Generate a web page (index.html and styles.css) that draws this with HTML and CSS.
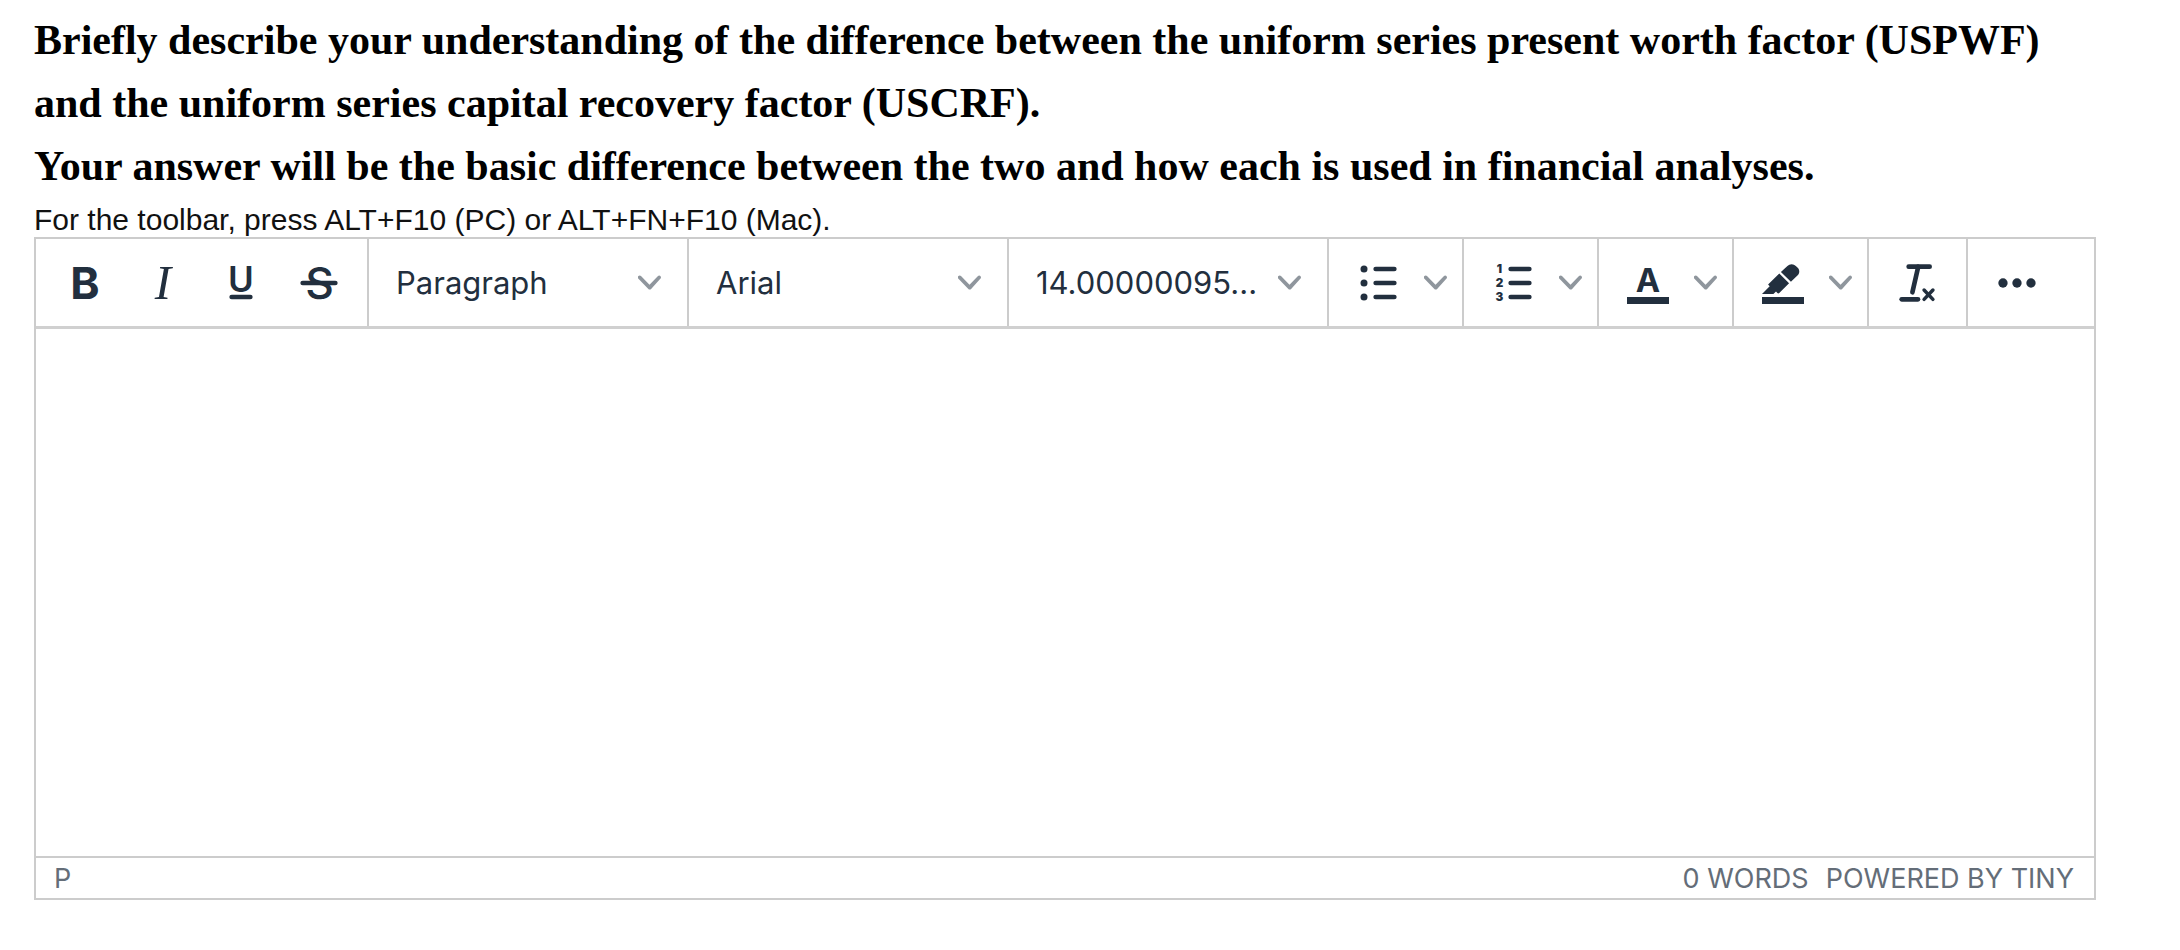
FILE: index.html
```html
<!DOCTYPE html>
<html lang="en">
<head>
    <meta charset="UTF-8">
    <meta name="viewport" content="width=device-width, initial-scale=1.0">
    <title>Essay Question</title>
    <link rel="stylesheet" href="styles.css">
</head>
<body>

    <main class="question">
        <div class="prompt">
            <p>Briefly describe your understanding of the difference between the uniform series present worth factor (USPWF) and the uniform series capital recovery factor (USCRF).</p>
            <p>Your answer will be the basic difference between the two and how each is used in financial analyses.</p>
        </div>

        <label class="hint" for="answer">For the toolbar, press ALT+F10 (PC) or ALT+FN+F10 (Mac).</label>

        <div class="editor">
            <div class="toolbar" role="toolbar">
                <div class="group">
                    <button type="button" class="tool" aria-label="Bold">
                        <svg class="icon" viewBox="0 0 24 24"><text class="bold" x="12" y="19">B</text></svg>
                    </button>
                    <button type="button" class="tool" aria-label="Italic">
                        <svg class="icon" viewBox="0 0 24 24"><text class="italic" x="12" y="19">I</text></svg>
                    </button>
                    <button type="button" class="tool" aria-label="Underline">
                        <svg class="icon" viewBox="0 0 24 24">
                            <text class="underline" x="12" y="15.7">U</text>
                            <rect x="7" y="17" width="10" height="2" rx="1"/>
                        </svg>
                    </button>
                    <button type="button" class="tool" aria-label="Strikethrough">
                        <svg class="icon" viewBox="0 0 24 24">
                            <text class="strike" x="12.2" y="18.8">S</text>
                            <rect x="4" y="11" width="16" height="2" rx="1"/>
                        </svg>
                    </button>
                </div>

                <div class="group select-group">
                    <select class="picker" aria-label="Blocks">
                        <option>Paragraph</option>
                    </select>
                    <svg class="chevron" viewBox="0 0 10 10"><path d="M8.7 2.2c.3-.3.8-.3 1 0 .4.4.4.9 0 1.2L5.7 7.8c-.3.3-.9.3-1.2 0L.2 3.4a.8.8 0 0 1 0-1.2c.3-.3.8-.3 1.1 0L5 6l3.7-3.8Z"/></svg>
                </div>
                <div class="group select-group">
                    <select class="picker" aria-label="Fonts">
                        <option>Arial</option>
                    </select>
                    <svg class="chevron" viewBox="0 0 10 10"><path d="M8.7 2.2c.3-.3.8-.3 1 0 .4.4.4.9 0 1.2L5.7 7.8c-.3.3-.9.3-1.2 0L.2 3.4a.8.8 0 0 1 0-1.2c.3-.3.8-.3 1.1 0L5 6l3.7-3.8Z"/></svg>
                </div>
                <div class="group select-group">
                    <select class="picker" aria-label="Font sizes">
                        <option>14.00000095...</option>
                    </select>
                    <svg class="chevron" viewBox="0 0 10 10"><path d="M8.7 2.2c.3-.3.8-.3 1 0 .4.4.4.9 0 1.2L5.7 7.8c-.3.3-.9.3-1.2 0L.2 3.4a.8.8 0 0 1 0-1.2c.3-.3.8-.3 1.1 0L5 6l3.7-3.8Z"/></svg>
                </div>

                <div class="group">
                    <button type="button" class="tool" aria-label="Bullet list">
                        <svg class="icon" viewBox="0 0 24 24">
                            <rect x="10" y="5" width="10" height="2" rx="1"/>
                            <rect x="10" y="11" width="10" height="2" rx="1"/>
                            <rect x="10" y="17" width="10" height="2" rx="1"/>
                            <circle cx="6" cy="6" r="1.5"/>
                            <circle cx="6" cy="12" r="1.5"/>
                            <circle cx="6" cy="18" r="1.5"/>
                        </svg>
                    </button>
                    <button type="button" class="more" aria-label="Bullet list menu">
                        <svg class="chevron" viewBox="0 0 10 10"><path d="M8.7 2.2c.3-.3.8-.3 1 0 .4.4.4.9 0 1.2L5.7 7.8c-.3.3-.9.3-1.2 0L.2 3.4a.8.8 0 0 1 0-1.2c.3-.3.8-.3 1.1 0L5 6l3.7-3.8Z"/></svg>
                    </button>
                </div>
                <div class="group">
                    <button type="button" class="tool" aria-label="Numbered list">
                        <svg class="icon" viewBox="0 0 24 24">
                            <rect x="10" y="5" width="10" height="2" rx="1"/>
                            <rect x="10" y="11" width="10" height="2" rx="1"/>
                            <rect x="10" y="17" width="10" height="2" rx="1"/>
                            <text class="digit" x="6.2" y="7.8">1</text>
                            <text class="digit" x="6.2" y="13.8">2</text>
                            <text class="digit" x="6.2" y="19.8">3</text>
                        </svg>
                    </button>
                    <button type="button" class="more" aria-label="Numbered list menu">
                        <svg class="chevron" viewBox="0 0 10 10"><path d="M8.7 2.2c.3-.3.8-.3 1 0 .4.4.4.9 0 1.2L5.7 7.8c-.3.3-.9.3-1.2 0L.2 3.4a.8.8 0 0 1 0-1.2c.3-.3.8-.3 1.1 0L5 6l3.7-3.8Z"/></svg>
                    </button>
                </div>
                <div class="group">
                    <button type="button" class="tool" aria-label="Text color">
                        <svg class="icon" viewBox="0 0 24 24">
                            <text class="color" x="12" y="16">A</text>
                            <path d="M3 18h18v3H3z"/>
                        </svg>
                    </button>
                    <button type="button" class="more" aria-label="Text color menu">
                        <svg class="chevron" viewBox="0 0 10 10"><path d="M8.7 2.2c.3-.3.8-.3 1 0 .4.4.4.9 0 1.2L5.7 7.8c-.3.3-.9.3-1.2 0L.2 3.4a.8.8 0 0 1 0-1.2c.3-.3.8-.3 1.1 0L5 6l3.7-3.8Z"/></svg>
                    </button>
                </div>
                <div class="group">
                    <button type="button" class="tool" aria-label="Background color">
                        <svg class="icon" viewBox="0 0 24 24">
                            <path d="M3 18h18v3H3z"/>
                            <path d="M7.7 16.7H3l3.3-3.3-.7-.8L10.4 7.900l4.200 4.200-4.200 4.200c-.2.2-.6.2-.8 0l-.6-.7-1.1 1.1zm3.400-9.400L13.900 4.700a2.600 2.600 0 0 1 3.600 0L18.300 5.500c.9.9.9 2.300 0 3.200l-2.900 2.800z"/>
                        </svg>
                    </button>
                    <button type="button" class="more" aria-label="Background color menu">
                        <svg class="chevron" viewBox="0 0 10 10"><path d="M8.7 2.2c.3-.3.8-.3 1 0 .4.4.4.9 0 1.2L5.7 7.8c-.3.3-.9.3-1.2 0L.2 3.4a.8.8 0 0 1 0-1.2c.3-.3.8-.3 1.1 0L5 6l3.7-3.8Z"/></svg>
                    </button>
                </div>

                <div class="group">
                    <button type="button" class="tool" aria-label="Clear formatting">
                        <svg class="icon lines" viewBox="0 0 24 24">
                            <line x1="8" y1="5" x2="17" y2="5"/>
                            <line x1="12.1" y1="5" x2="9.6" y2="16"/>
                            <line x1="5" y1="19" x2="12" y2="19"/>
                            <line class="cross" x1="14.6" y1="15" x2="18.4" y2="19"/>
                            <line class="cross" x1="18.4" y1="15" x2="14.6" y2="19"/>
                        </svg>
                    </button>
                </div>
                <div class="group last">
                    <button type="button" class="tool" aria-label="More">
                        <svg class="icon" viewBox="0 0 24 24">
                            <circle cx="6" cy="12" r="2"/>
                            <circle cx="12" cy="12" r="2"/>
                            <circle cx="18" cy="12" r="2"/>
                        </svg>
                    </button>
                </div>
            </div>

            <textarea class="content" id="answer"></textarea>

            <div class="statusbar">
                <span class="path">P</span>
                <span>0 WORDS</span>
                <a href="#">POWERED BY TINY</a>
            </div>
        </div>
    </main>

</body>
</html>
```
FILE: styles.css
```css
body {
    margin: 0;
    background: #fff;
    color: #000;
}

.question {
    padding: 9px 84px 48px 34px;
}

.prompt {
    font-family: "Liberation Serif", "Times New Roman", serif;
    font-size: 42px;
    font-weight: bold;
    line-height: 63px;
}

.prompt p {
    margin: 0;
}

.hint {
    display: block;
    padding-top: 5px;
    font-family: "Liberation Sans", Arial, sans-serif;
    font-size: 30px;
    line-height: 34px;
    color: #111;
}

.editor {
    border: 2px solid #ccc;
    font-family: Inter, sans-serif;
}

/* toolbar */
.toolbar {
    display: flex;
    border-bottom: 3px solid #d0d0d0;
}

.group {
    display: flex;
    align-items: center;
    height: 87px;
    padding: 0 9px 0 10px;
    border-right: 2px solid #ccc;
}

.group.last {
    border-right: 0;
}

.tool,
.more {
    display: flex;
    align-items: center;
    justify-content: center;
    height: 78px;
    padding: 0;
    border: 0;
    background: none;
    cursor: pointer;
}

.tool {
    width: 78px;
}

.more {
    width: 36px;
}

.icon {
    width: 56px;
    height: 56px;
    fill: #222f3e;
}

.icon text {
    font-family: Inter, sans-serif;
    text-anchor: middle;
}

.icon .bold {
    font-size: 19px;
    font-weight: 700;
}

.icon .italic {
    font-family: "Liberation Serif", serif;
    font-size: 21px;
    font-style: italic;
}

.icon .underline {
    font-size: 15px;
    font-weight: 600;
}

.icon .strike {
    font-size: 19px;
    font-weight: 500;
}

.icon .color {
    font-size: 14px;
    font-weight: 700;
}

.icon .digit {
    font-size: 5px;
    font-weight: 900;
}

.lines {
    stroke: #222f3e;
    stroke-width: 2;
    stroke-linecap: round;
}

.lines .cross {
    stroke-width: 1.5;
}

.chevron {
    width: 23px;
    height: 23px;
    fill: #222f3e;
    opacity: 0.5;
}

.select-group {
    position: relative;
    width: 318px;
    padding: 0;
}

.select-group .chevron {
    position: absolute;
    right: 26px;
    pointer-events: none;
}

.picker {
    appearance: none;
    width: 100%;
    height: 78px;
    padding: 0 56px 0 27px;
    border: 0;
    background: none;
    color: #222f3e;
    font-family: Inter, sans-serif;
    font-size: 31px;
}

/* writing area */
.content {
    display: block;
    box-sizing: border-box;
    width: 100%;
    height: 527px;
    padding: 20px;
    border: 0;
    outline: 0;
    resize: none;
    font-family: "Liberation Sans", Arial, sans-serif;
    font-size: 30px;
}

.statusbar {
    display: flex;
    align-items: center;
    gap: 17px;
    height: 40px;
    padding: 0 20px 0 18px;
    border-top: 2px solid #ccc;
    color: #646d78;
    font-size: 27px;
}

.statusbar .path {
    flex: 1;
}

.statusbar a {
    color: inherit;
    text-decoration: none;
}
```
